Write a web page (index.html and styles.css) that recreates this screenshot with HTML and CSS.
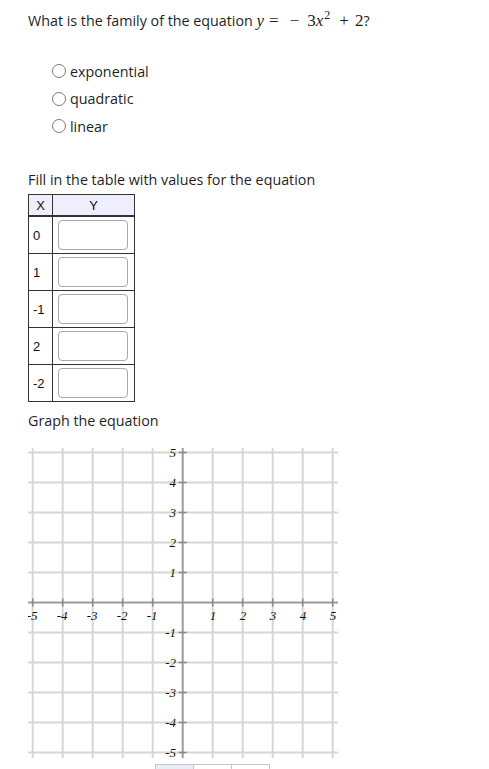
FILE: index.html
```html
<!DOCTYPE html>
<html>
<head>
<meta charset="utf-8">
<link rel="stylesheet" href="styles.css">
</head>
<body>
<div class="page">
  <p class="question">What is the family of the equation <span class="math"><i>y</i><span class="op eq">=</span><span class="op minus">−</span>3<i>x</i><sup>2</sup><span class="op plus">+</span>2</span>?</p>

  <ul class="options">
    <li class="option"><span class="radio"></span><span>exponential</span></li>
    <li class="option"><span class="radio"></span><span>quadratic</span></li>
    <li class="option"><span class="radio"></span><span>linear</span></li>
  </ul>

  <p class="prompt">Fill in the table with values for the equation</p>

  <table class="values">
    <thead>
      <tr><th class="xcol">X</th><th class="ycol">Y</th></tr>
    </thead>
    <tbody>
      <tr><td class="xcell">0</td><td class="ycell"><span class="box"></span></td></tr>
      <tr><td class="xcell">1</td><td class="ycell"><span class="box"></span></td></tr>
      <tr><td class="xcell">-1</td><td class="ycell"><span class="box"></span></td></tr>
      <tr><td class="xcell">2</td><td class="ycell"><span class="box"></span></td></tr>
      <tr><td class="xcell">-2</td><td class="ycell"><span class="box"></span></td></tr>
    </tbody>
  </table>

  <p class="prompt graph-title">Graph the equation</p>

  <div class="graph">
    <svg width="310" height="310" viewBox="0 0 310 310" xmlns="http://www.w3.org/2000/svg">
      <g stroke="#d6d6d6" stroke-width="2">
        <line x1="4.7" y1="0" x2="4.7" y2="310"/>
        <line x1="34.7" y1="0" x2="34.7" y2="310"/>
        <line x1="64.7" y1="0" x2="64.7" y2="310"/>
        <line x1="94.7" y1="0" x2="94.7" y2="310"/>
        <line x1="124.7" y1="0" x2="124.7" y2="310"/>
        <line x1="184.7" y1="0" x2="184.7" y2="310"/>
        <line x1="214.7" y1="0" x2="214.7" y2="310"/>
        <line x1="244.7" y1="0" x2="244.7" y2="310"/>
        <line x1="274.7" y1="0" x2="274.7" y2="310"/>
        <line x1="304.7" y1="0" x2="304.7" y2="310"/>
        <line x1="0" y1="4.5" x2="310" y2="4.5"/>
        <line x1="0" y1="34.5" x2="310" y2="34.5"/>
        <line x1="0" y1="64.5" x2="310" y2="64.5"/>
        <line x1="0" y1="94.5" x2="310" y2="94.5"/>
        <line x1="0" y1="124.5" x2="310" y2="124.5"/>
        <line x1="0" y1="184.5" x2="310" y2="184.5"/>
        <line x1="0" y1="214.5" x2="310" y2="214.5"/>
        <line x1="0" y1="244.5" x2="310" y2="244.5"/>
        <line x1="0" y1="274.5" x2="310" y2="274.5"/>
        <line x1="0" y1="304.5" x2="310" y2="304.5"/>
      </g>
      <g stroke="#9a9a9a" stroke-width="2">
        <line x1="154.7" y1="0" x2="154.7" y2="310"/>
        <line x1="0" y1="154.5" x2="310" y2="154.5"/>
      </g>
      <g stroke="#888" stroke-width="1.5">
        <line x1="150.7" y1="4.5" x2="158.7" y2="4.5"/>
        <line x1="150.7" y1="34.5" x2="158.7" y2="34.5"/>
        <line x1="150.7" y1="64.5" x2="158.7" y2="64.5"/>
        <line x1="150.7" y1="94.5" x2="158.7" y2="94.5"/>
        <line x1="150.7" y1="124.5" x2="158.7" y2="124.5"/>
        <line x1="150.7" y1="184.5" x2="158.7" y2="184.5"/>
        <line x1="150.7" y1="214.5" x2="158.7" y2="214.5"/>
        <line x1="150.7" y1="244.5" x2="158.7" y2="244.5"/>
        <line x1="150.7" y1="274.5" x2="158.7" y2="274.5"/>
        <line x1="150.7" y1="304.5" x2="158.7" y2="304.5"/>
        <line x1="4.7" y1="150.5" x2="4.7" y2="158.5"/>
        <line x1="34.7" y1="150.5" x2="34.7" y2="158.5"/>
        <line x1="64.7" y1="150.5" x2="64.7" y2="158.5"/>
        <line x1="94.7" y1="150.5" x2="94.7" y2="158.5"/>
        <line x1="124.7" y1="150.5" x2="124.7" y2="158.5"/>
        <line x1="184.7" y1="150.5" x2="184.7" y2="158.5"/>
        <line x1="214.7" y1="150.5" x2="214.7" y2="158.5"/>
        <line x1="244.7" y1="150.5" x2="244.7" y2="158.5"/>
        <line x1="274.7" y1="150.5" x2="274.7" y2="158.5"/>
        <line x1="304.7" y1="150.5" x2="304.7" y2="158.5"/>
      </g>
      <g class="ylabels" text-anchor="end">
        <text x="148" y="9">5</text>
        <text x="148" y="39">4</text>
        <text x="148" y="69">3</text>
        <text x="148" y="99">2</text>
        <text x="148" y="129">1</text>
        <text x="148" y="189">-1</text>
        <text x="148" y="219">-2</text>
        <text x="148" y="249">-3</text>
        <text x="148" y="279">-4</text>
        <text x="148" y="309">-5</text>
      </g>
      <g class="xlabels" text-anchor="middle">
        <text x="4.2" y="172">-5</text>
        <text x="34.2" y="172">-4</text>
        <text x="64.2" y="172">-3</text>
        <text x="94.2" y="172">-2</text>
        <text x="124.2" y="172">-1</text>
        <text x="185" y="172">1</text>
        <text x="215" y="172">2</text>
        <text x="245" y="172">3</text>
        <text x="275" y="172">4</text>
        <text x="305" y="172">5</text>
      </g>
    </svg>
  </div>

  <div class="toolbar">
    <span class="tool active"></span>
    <span class="tool"></span>
    <span class="tool"></span>
  </div>
</div>
</body>
</html>
```

FILE: styles.css
```css
html, body {
  margin: 0;
  padding: 0;
  background: #fff;
}

body {
  font-family: "Open Sans", "DejaVu Sans", sans-serif;
  font-size: 14.3px;
  color: #1f1f1f;
}

.page {
  padding: 10px 0 0 28px;
}

.question {
  margin: 0;
  line-height: 22px;
  height: 22px;
}

.math {
  font-family: "Liberation Serif", "DejaVu Serif", serif;
  font-size: 17px;
}

.math i {
  font-style: italic;
}

.math sup {
  font-size: 12px;
  vertical-align: 7px;
  line-height: 0;
  margin-left: 1px;
}

.op {
  display: inline-block;
}

.eq {
  margin: 0 11px 0 5px;
}

.minus {
  margin-right: 8px;
}

.plus {
  margin: 0 6px 0 9px;
}

.options {
  list-style: none;
  margin: 25.5px 0 0 24px;
  padding: 0;
}

.option {
  display: flex;
  align-items: center;
  height: 27.5px;
  gap: 4px;
}

.radio {
  width: 12px;
  height: 12px;
  border: 1px solid #7a7a7a;
  border-radius: 50%;
  background: #fff;
}

.prompt {
  margin: 30px 0 0 0;
  line-height: 20px;
}

.values {
  border-collapse: collapse;
  margin-top: 4px;
  font-family: "Liberation Sans", Arial, sans-serif;
  font-size: 13px;
}

.values th {
  background: #eeeefc;
  border: 1px solid #333;
  border-bottom: 2px solid #333;
  height: 20px;
  padding: 0;
  font-weight: normal;
  color: #111;
}

.xcol {
  width: 23px;
}

.ycol {
  width: 81px;
}

.values td {
  border: 1px solid #333;
  height: 36px;
  padding: 0;
}

.xcell {
  padding-left: 4px !important;
  color: #111;
}

.ycell {
  padding: 0 4px 0 5px !important;
}

.box {
  display: block;
  width: 68px;
  height: 28px;
  border: 1px solid #a8a8a8;
  border-radius: 4px;
  background: #fff;
}

.graph-title {
  margin-top: 9px;
}

.graph {
  margin-top: 17px;
  width: 310px;
  height: 310px;
}

.graph svg {
  display: block;
}

.graph text {
  font-family: "Liberation Serif", "DejaVu Serif", serif;
  font-style: italic;
  font-size: 13px;
  fill: #111;
}

.toolbar {
  display: flex;
  margin: 6px 0 0 127px;
}

.tool {
  width: 37px;
  height: 12px;
  border: 1px solid #c8c8c8;
  border-bottom: none;
  margin-right: -1px;
  background: #fff;
}

.tool.active {
  background: #e6eef8;
}
```
